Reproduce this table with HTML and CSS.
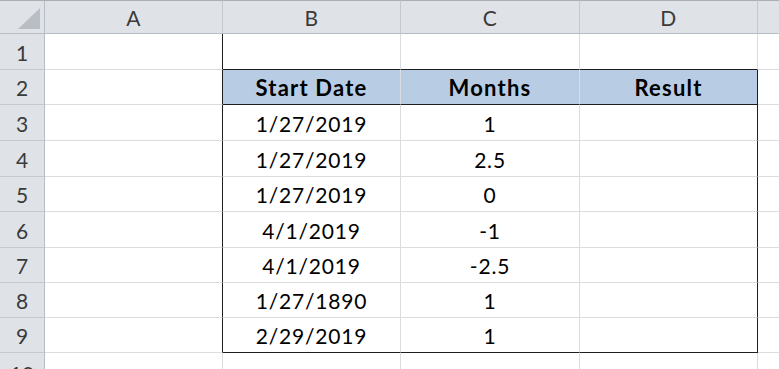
FILE: index.html
```html
<!DOCTYPE html>
<html>
<head>
<meta charset="utf-8">
<link rel="stylesheet" href="styles.css">
</head>
<body>
<div class="sheet">
  <div class="corner"><svg class="tri" width="22" height="21" viewBox="0 0 22 21"><polygon points="0,21 22,21 22,0" fill="#b9bec5"/></svg></div>
  <div class="ch">A</div><div class="ch">B</div><div class="ch">C</div><div class="ch">D</div><div class="ch last"></div>

  <div class="rh r1">1</div>
  <div class="c r1 edge-r"></div><div class="c r1 edge-b"></div><div class="c r1 edge-b"></div><div class="c r1 edge-b"></div><div class="c r1"></div>

  <div class="rh r2">2</div>
  <div class="c r2 edge-r"></div><div class="c r2 hd edge-b">Start Date</div><div class="c r2 hd edge-b">Months</div><div class="c r2 hd edge-b edge-r">Result</div><div class="c r2"></div>

  <div class="rh r3">3</div>
  <div class="c r3 edge-r"></div><div class="c r3">1/27/2019</div><div class="c r3">1</div><div class="c r3 edge-r"></div><div class="c r3"></div>

  <div class="rh r4">4</div>
  <div class="c r4 edge-r"></div><div class="c r4">1/27/2019</div><div class="c r4">2.5</div><div class="c r4 edge-r"></div><div class="c r4"></div>

  <div class="rh r5">5</div>
  <div class="c r5 edge-r"></div><div class="c r5">1/27/2019</div><div class="c r5">0</div><div class="c r5 edge-r"></div><div class="c r5"></div>

  <div class="rh r6">6</div>
  <div class="c r6 edge-r"></div><div class="c r6">4/1/2019</div><div class="c r6">-1</div><div class="c r6 edge-r"></div><div class="c r6"></div>

  <div class="rh r7">7</div>
  <div class="c r7 edge-r"></div><div class="c r7">4/1/2019</div><div class="c r7">-2.5</div><div class="c r7 edge-r"></div><div class="c r7"></div>

  <div class="rh r8">8</div>
  <div class="c r8 edge-r"></div><div class="c r8">1/27/1890</div><div class="c r8">1</div><div class="c r8 edge-r"></div><div class="c r8"></div>

  <div class="rh r9">9</div>
  <div class="c r9 edge-r"></div><div class="c r9 edge-b">2/29/2019</div><div class="c r9 edge-b">1</div><div class="c r9 edge-b edge-r"></div><div class="c r9"></div>

  <div class="rh r10">10</div>
  <div class="c r10"></div><div class="c r10"></div><div class="c r10"></div><div class="c r10"></div><div class="c r10"></div>
</div>
</body>
</html>
```

FILE: styles.css
```css
html, body {
  margin: 0;
  padding: 0;
  background: #ffffff;
  overflow: hidden;
}
.sheet {
  display: grid;
  grid-template-columns: 45px 178px 178px 179px 178px 40px;
  grid-template-rows: 34px 36px 35px 36px 36px 35px 36px 35px 35px 35px 20px;
  width: 779px;
  height: 369px;
  overflow: hidden;
  font-family: Lato, "Noto Sans", sans-serif;
}
.sheet > div {
  box-sizing: border-box;
  overflow: hidden;
}
.corner {
  background: #dfe3e8;
  border-top: 1px solid #a9afb7;
  border-right: 1px solid #b7bdc5;
  border-bottom: 1px solid #b7bdc5;
  display: flex;
  align-items: flex-end;
  justify-content: flex-end;
  padding: 0 4px 4px 0;
}
.tri {
  display: block;
}
.ch {
  background: #dfe3e8;
  border-top: 1px solid #a9afb7;
  border-right: 1px solid #c4c9d0;
  border-bottom: 1px solid #b7bdc5;
  color: #3a3a3a;
  font-size: 21px;
  letter-spacing: 0.5px;
  display: flex;
  align-items: center;
  justify-content: center;
  padding-top: 1px;
}
.ch.last {
  border-right: none;
}
.rh {
  background: #dfe3e8;
  border-right: 1px solid #b7bdc5;
  border-bottom: 1px solid #c4c9d0;
  color: #3a3a3a;
  font-size: 21px;
  display: flex;
  align-items: flex-end;
  justify-content: center;
  padding-bottom: 4px;
}
.c {
  border-right: 1px solid #dadcdf;
  border-bottom: 1px solid #dadcdf;
  color: #000000;
  font-size: 21px;
  letter-spacing: 0.8px;
  display: flex;
  align-items: flex-end;
  justify-content: center;
  padding-bottom: 4px;
  white-space: nowrap;
}
.c.edge-r {
  border-right-color: #1e1e1e;
}
.c.edge-b {
  border-bottom-color: #1e1e1e;
}
.c.hd {
  background: #b8cce4;
  font-weight: 700;
  font-size: 22px;
  letter-spacing: 1.2px;
  padding-bottom: 3px;
}
.rh.r10, .c.r10 {
  padding-bottom: 0;
  align-items: flex-start;
  padding-top: 8px;
}
```
